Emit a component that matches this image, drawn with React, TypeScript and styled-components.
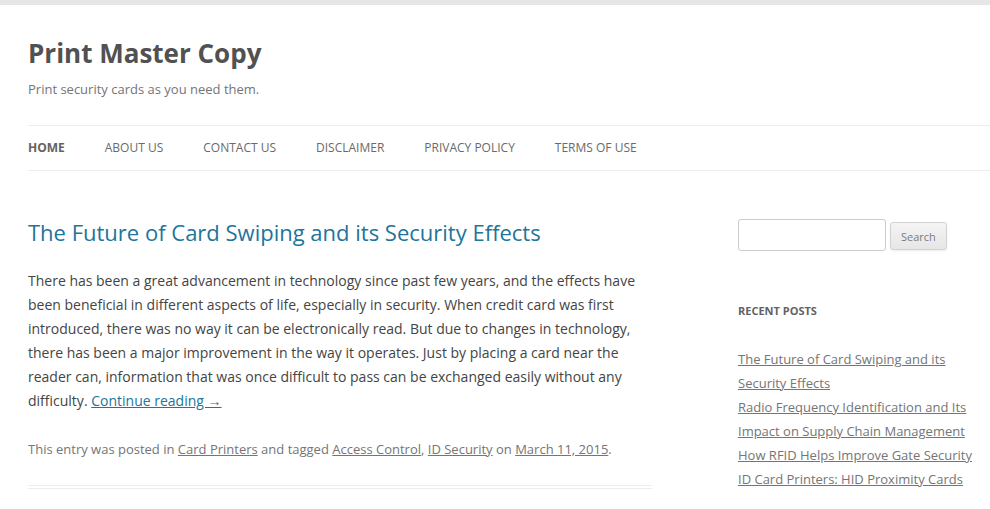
import React from "react";
import styled, { createGlobalStyle } from "styled-components";

const GlobalStyle = createGlobalStyle`
  html, body { margin: 0; padding: 0; background: #fff; }
  body {
    font-family: "Open Sans", "Liberation Sans", Helvetica, Arial, sans-serif;
    color: #444;
    overflow: hidden;
    -webkit-font-smoothing: antialiased;
  }
  * { box-sizing: border-box; }
`;

const TopStrip = styled.div`
  height: 5px;
  background: #e6e6e6;
`;

const Site = styled.div`
  padding: 0 0 0 28px;
  width: 1200px;
`;

const Header = styled.header`
  padding: 24px 0 24px;
`;

const SiteTitle = styled.h1`
  margin: 0;
  font-size: 26px;
  line-height: 48px;
  font-weight: 700;
  color: #515151;
`;

const Tagline = styled.h2`
  margin: 0;
  font-size: 13px;
  line-height: 24px;
  font-weight: 400;
  color: #757575;
`;

const Nav = styled.nav`
  margin-top: 24px;
  border-top: 1px solid #ededed;
  border-bottom: 1px solid #ededed;
  display: flex;
  gap: 40px;
`;

const NavItem = styled.a<{ $current?: boolean }>`
  font-size: 12px;
  line-height: 44px;
  text-transform: uppercase;
  white-space: nowrap;
  text-decoration: none;
  color: ${(p) => (p.$current ? "#636363" : "#6a6a6a")};
  font-weight: ${(p) => (p.$current ? 700 : 400)};
`;

const Main = styled.div`
  display: flex;
  margin-top: 26px;
`;

const Content = styled.main`
  width: 624px;
  flex: none;
`;

const Article = styled.article`
  padding-bottom: 24px;
  border-bottom: 4px double #ededed;
`;

const EntryTitle = styled.h1`
  margin: -1px 0 25px;
  font-size: 22px;
  line-height: 24px;
  font-weight: 400;
  a {
    color: #21759b;
    text-decoration: none;
  }
`;

const EntryText = styled.p`
  margin: 0 0 24px;
  font-size: 14px;
  line-height: 24px;
  color: #444;
  a {
    color: #21759b;
    text-decoration: underline;
  }
`;

const EntryMeta = styled.footer`
  font-size: 13px;
  line-height: 24px;
  color: #757575;
  a {
    color: #757575;
    text-decoration: underline;
  }
`;

const Sidebar = styled.aside`
  margin-left: 86px;
  width: 250px;
  flex: none;
`;

const SearchForm = styled.form`
  display: flex;
  align-items: center;
  gap: 4px;
  margin-top: -2px;
  margin-bottom: 48px;
`;

const SearchInput = styled.input`
  width: 148px;
  height: 32px;
  border: 1px solid #ccc;
  border-radius: 3px;
  padding: 6px;
  font-family: inherit;
  font-size: 12px;
  background: #fff;
`;

const SearchButton = styled.button`
  height: 28px;
  padding: 0 10px;
  font-family: inherit;
  font-size: 11px;
  color: #7c7c7c;
  background: linear-gradient(to bottom, #f4f4f4, #e6e6e6);
  border: 1px solid #d2d2d2;
  border-radius: 3px;
  box-shadow: 0 1px 2px rgba(64, 64, 64, 0.1);
  margin-top: 2px;
`;

const WidgetTitle = styled.h3`
  margin: 0 0 24px;
  font-size: 11px;
  line-height: 24px;
  font-weight: 700;
  text-transform: uppercase;
  color: #636363;
`;

const PostList = styled.ul`
  list-style: none;
  margin: 0;
  padding: 0;
`;

const PostItem = styled.li`
  font-size: 13px;
  line-height: 24px;
  a {
    color: #757575;
    text-decoration: underline;
  }
`;

const navItems = ["Home", "About Us", "Contact Us", "Disclaimer", "Privacy Policy", "Terms of Use"];

const recent = [
  "The Future of Card Swiping and its Security Effects",
  "Radio Frequency Identification and Its Impact on Supply Chain Management",
  "How RFID Helps Improve Gate Security",
  "ID Card Printers: HID Proximity Cards",
];

export default function App() {
  return (
    <>
      <GlobalStyle />
      <TopStrip />
      <Site>
        <Header>
          <SiteTitle>Print Master Copy</SiteTitle>
          <Tagline>Print security cards as you need them.</Tagline>
          <Nav>
            {navItems.map((n, i) => (
              <NavItem key={n} href="#" $current={i === 0}>
                {n}
              </NavItem>
            ))}
          </Nav>
        </Header>
        <Main>
          <Content>
            <Article>
              <EntryTitle>
                <a href="#">The Future of Card Swiping and its Security Effects</a>
              </EntryTitle>
              <EntryText>
                There has been a great advancement in technology since past few years, and the effects have
                been beneficial in different aspects of life, especially in security. When credit card was first
                introduced, there was no way it can be electronically read. But due to changes in technology,
                there has been a major improvement in the way it operates. Just by placing a card near the
                reader can, information that was once difficult to pass can be exchanged easily without any
                difficulty. <a href="#">Continue reading →</a>
              </EntryText>
              <EntryMeta>
                This entry was posted in <a href="#">Card Printers</a> and tagged{" "}
                <a href="#">Access Control</a>, <a href="#">ID Security</a> on{" "}
                <a href="#">March 11, 2015</a>.
              </EntryMeta>
            </Article>
          </Content>
          <Sidebar>
            <SearchForm onSubmit={(e) => e.preventDefault()}>
              <SearchInput type="text" />
              <SearchButton type="submit">Search</SearchButton>
            </SearchForm>
            <WidgetTitle>Recent Posts</WidgetTitle>
            <PostList>
              {recent.map((r) => (
                <PostItem key={r}>
                  <a href="#">{r}</a>
                </PostItem>
              ))}
            </PostList>
          </Sidebar>
        </Main>
      </Site>
    </>
  );
}
